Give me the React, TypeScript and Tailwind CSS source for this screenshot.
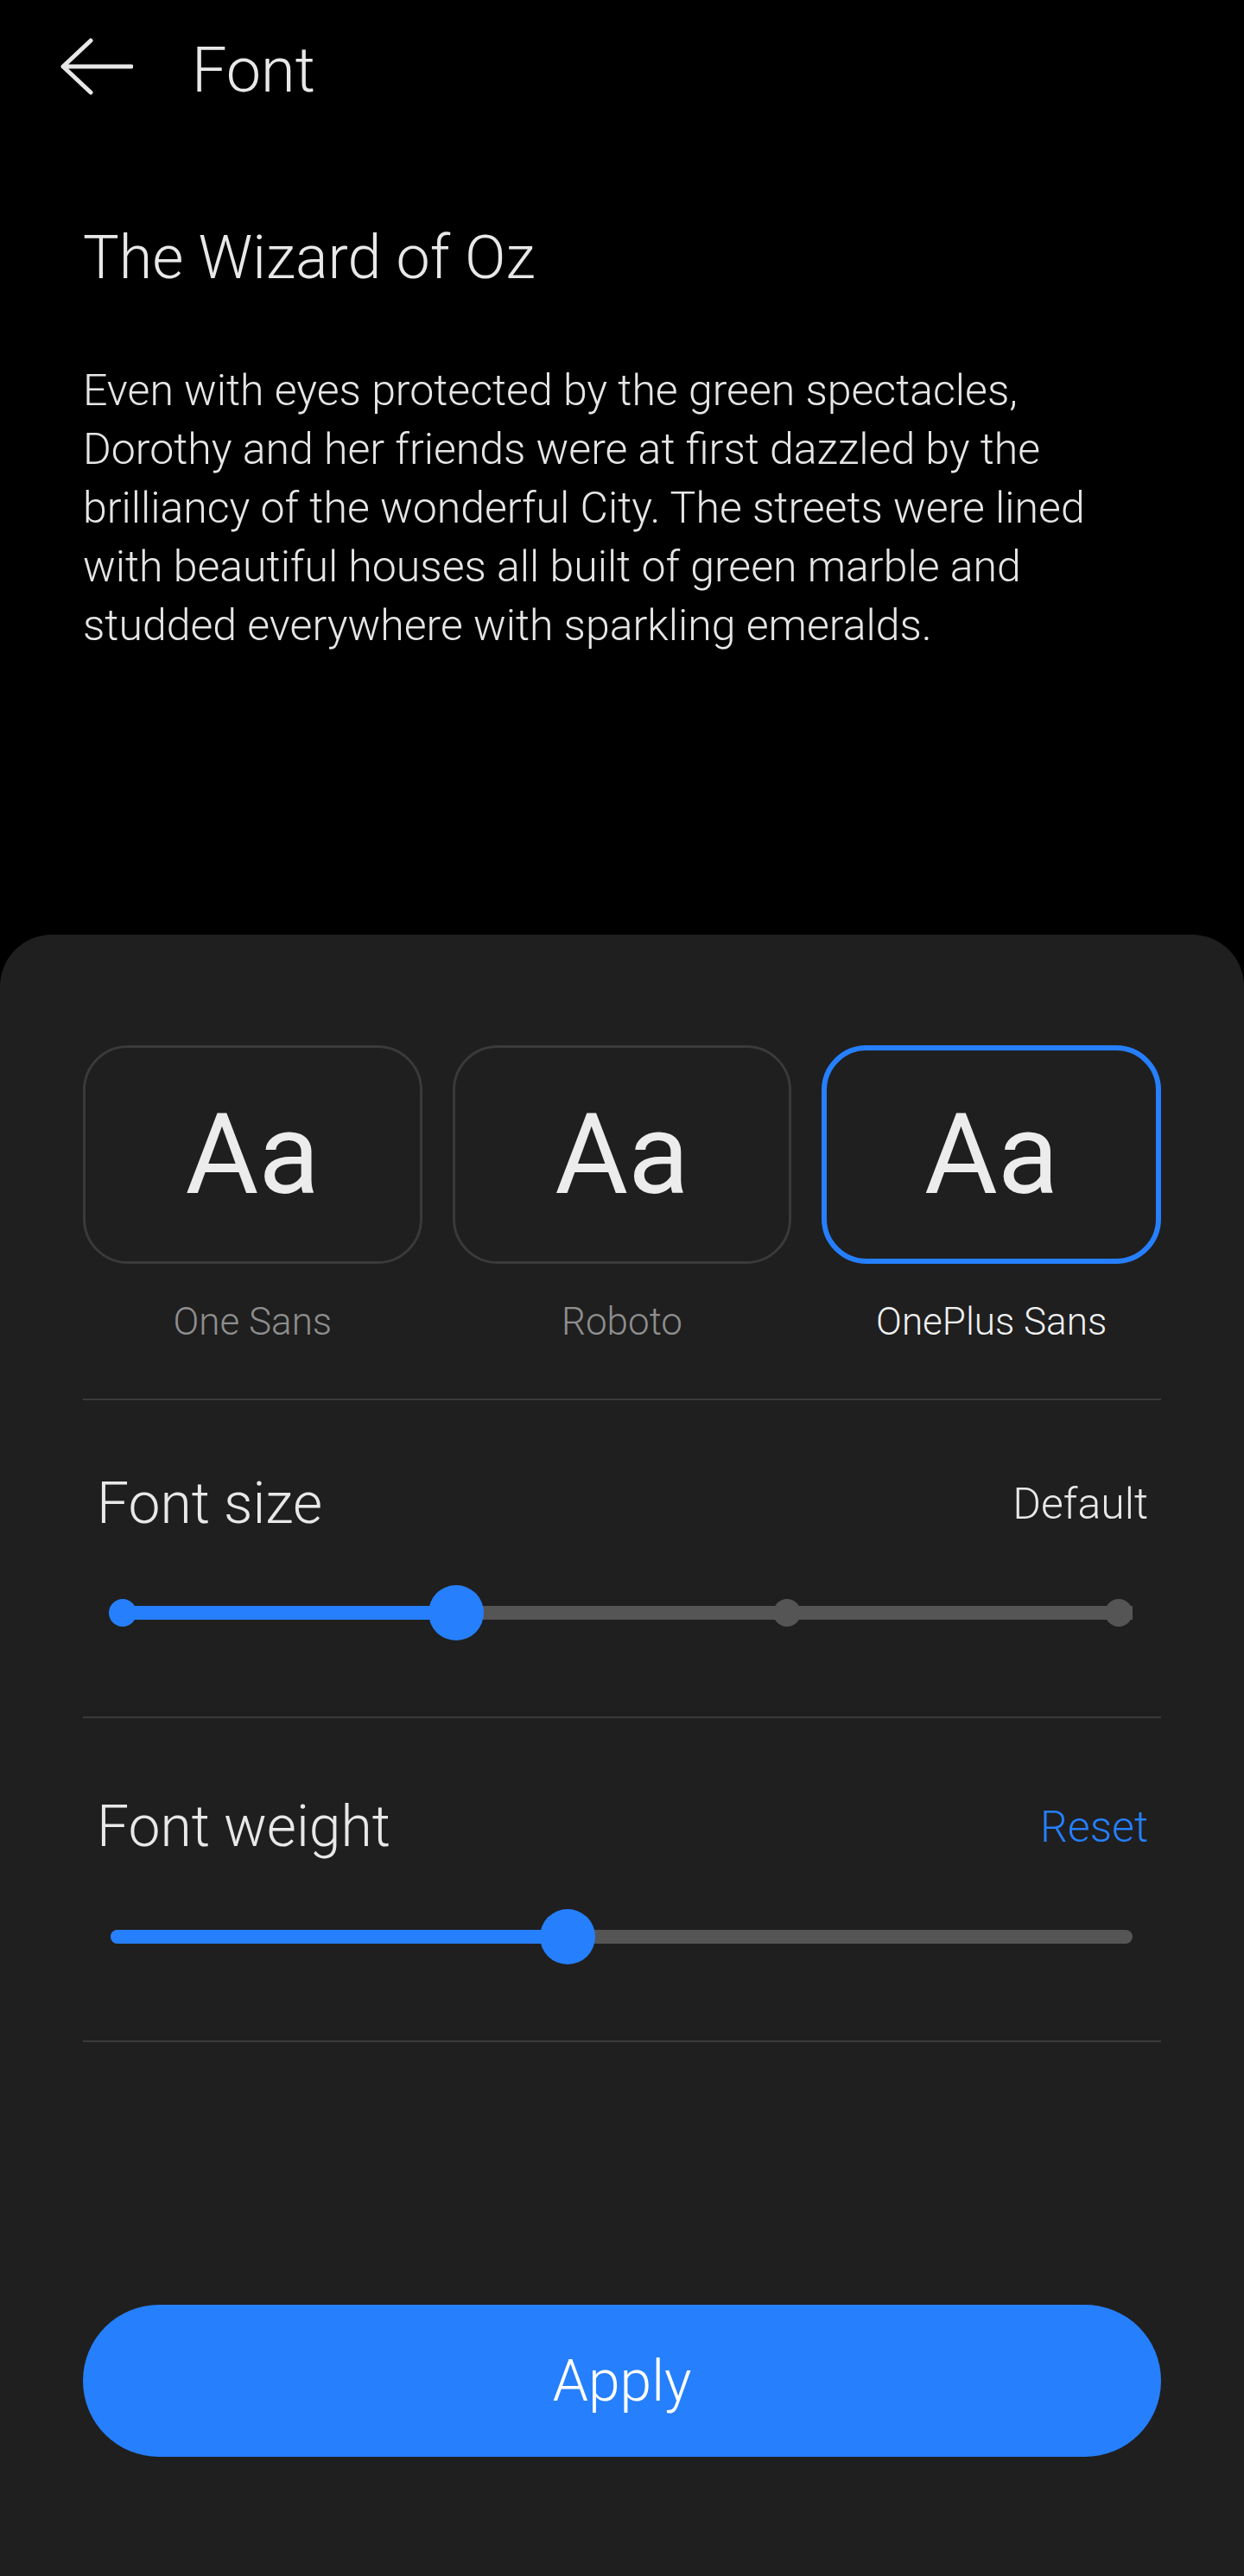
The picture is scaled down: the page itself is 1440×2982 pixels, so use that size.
import React from "react";

const fonts = [
  { name: "One Sans", selected: false },
  { name: "Roboto", selected: false },
  { name: "OnePlus Sans", selected: true },
];

const lines = [
  "Even with eyes protected by the green spectacles,",
  "Dorothy and her friends were at first dazzled by the",
  "brilliancy of the wonderful City. The streets were lined",
  "with beautiful houses all built of green marble and",
  "studded everywhere with sparkling emeralds.",
];

function StepSlider() {
  const stops = [14, 399, 783, 1167];
  return (
    <div className="relative ml-[32px] mr-[33px] h-[64px] flex items-center">
      <div className="h-[16px] w-full bg-[#555555]" />
      <div className="absolute left-0 top-[24px] h-[16px] w-[400px] bg-[#267ffd]" />
      {stops.map((x, i) => (
        <div
          key={i}
          className={`absolute top-[16px] h-[32px] w-[32px] -translate-x-1/2 rounded-full ${
            i <= 1 ? "bg-[#267ffd]" : "bg-[#555555]"
          }`}
          style={{ left: x }}
        />
      ))}
      <div className="absolute left-[400px] top-0 h-[64px] w-[64px] -translate-x-1/2 rounded-full bg-[#267ffd]" />
    </div>
  );
}

function WeightSlider() {
  return (
    <div className="relative ml-[32px] mr-[33px] h-[64px] flex items-center">
      <div className="h-[16px] w-full rounded-full bg-[#555555]" />
      <div className="absolute left-0 top-[24px] h-[16px] w-[529px] rounded-l-full bg-[#267ffd]" />
      <div className="absolute left-[529px] top-0 h-[64px] w-[64px] -translate-x-1/2 rounded-full bg-[#267ffd]" />
    </div>
  );
}

export default function App() {
  return (
    <div className="w-[1440px] min-h-[2982px] bg-black flex flex-col font-['Roboto','Liberation_Sans',sans-serif] font-light text-[#e8e8e8]">
      {/* Preview */}
      <div className="h-[1082px] flex flex-col">
        <div className="h-[164px] flex items-center pl-[70px]">
          <svg width="84" height="66" viewBox="0 0 84 66" fill="none" className="mb-[10px]">
            <path
              d="M82 33H3M35 3L3 33L35 63"
              stroke="#e8e8e8"
              strokeWidth="5"
              strokeLinecap="round"
              strokeLinejoin="round"
            />
          </svg>
          <h1 className="ml-[68px] text-[72px] leading-none">Font</h1>
        </div>
        <div className="px-[96px]">
          <h2 className="mt-[99px] text-[70px] leading-none">The Wizard of Oz</h2>
          <p className="mt-[85px] text-[50px] leading-[68px] text-[#e6e6e6]">
            {lines.map((l, i) => (
              <React.Fragment key={i}>
                {l}
                {i < lines.length - 1 && <br />}
              </React.Fragment>
            ))}
          </p>
        </div>
      </div>

      {/* Sheet */}
      <div className="flex-1 bg-[#1f1f1f] rounded-t-[60px] px-[96px] pt-[128px] pb-[140px] flex flex-col">
        <div className="grid grid-cols-3 gap-[35px]">
          {fonts.map((f) => (
            <div key={f.name} className="flex flex-col items-center">
              <div
                className={`w-full h-[253px] rounded-[52px] flex items-center justify-center ${
                  f.selected ? "border-[6px] border-[#267ffd]" : "border-[3px] border-[#3a3a3a]"
                }`}
              >
                <span className="text-[130px] leading-none font-normal text-[#ececec]">Aa</span>
              </div>
              <span
                className={`mt-[45px] text-[44px] leading-none ${
                  f.selected ? "text-[#f0f0f0]" : "text-[#8e8e8e]"
                }`}
              >
                {f.name}
              </span>
            </div>
          ))}
        </div>

        <div className="mt-[67px] h-[2px] bg-[#3a3a3a]" />

        <div className="mt-[87px] flex items-center justify-between pl-[16px] pr-[15px]">
          <span className="text-[66px] leading-none">Font size</span>
          <span className="text-[50px] leading-none">Default</span>
        </div>
        <div className="mt-[61px]">
          <StepSlider />
        </div>

        <div className="mt-[88px] h-[2px] bg-[#3a3a3a]" />

        <div className="mt-[93px] flex items-center justify-between pl-[16px] pr-[15px]">
          <span className="text-[66px] leading-none">Font weight</span>
          <span className="text-[50px] leading-none text-[#267ffd]">Reset</span>
        </div>
        <div className="mt-[62px]">
          <WeightSlider />
        </div>

        <div className="mt-[88px] h-[2px] bg-[#3a3a3a]" />

        <button className="mt-[304px] h-[176px] w-full rounded-full bg-[#267ffd] text-[66px] font-light text-white flex items-center justify-center">
          Apply
        </button>
      </div>
    </div>
  );
}
